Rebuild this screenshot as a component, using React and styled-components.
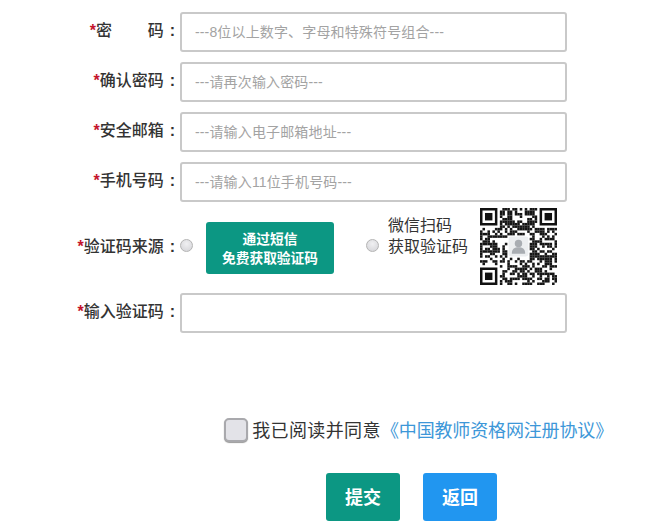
import React from 'react';
import styled, { createGlobalStyle } from 'styled-components';

const Global = createGlobalStyle`
  html, body { margin: 0; padding: 0; background: #fff; }
  body { font-family: "Liberation Sans", "Noto Sans CJK SC", sans-serif; overflow: hidden; }
`;
const Page = styled.div`
  width: 645px; height: 527px; overflow: hidden; padding-top: 12px; box-sizing: border-box;
  display: flex; flex-direction: column;
`;
const Row = styled.div`
  display: flex; align-items: center; height: 40px; margin-bottom: 10px;
`;
const Label = styled.label`
  width: 180px; flex: none; box-sizing: border-box; text-align: right; font-size: 16px; font-weight: 500; color: #333;
  white-space: pre; padding: 0 5px 6px 0;
`;
const Star = styled.span` color: #c4142c; font-weight: 700; `;
const Colon = styled.span` font-weight: 700; margin-left: 6px; `;
const Input = styled.input`
  width: 387px; height: 40px; box-sizing: border-box; border: 2px solid #c9c9c9; border-radius: 3px;
  padding: 0 13px 1px; font-size: 14px; letter-spacing: 0.15px; outline: none; background: #fff;
  font-family: "Liberation Sans", "Noto Sans CJK SC", sans-serif;
  &::placeholder { color: #a3a3a3; opacity: 1; }
`;
const SourceRow = styled.div`
  display: flex; align-items: center; height: 80px; margin: -4px 0 5px;
`;
const Radio = styled.span`
  width: 13px; height: 13px; flex: none; border-radius: 50%; box-sizing: border-box; margin-bottom: 6px;
  border: 1px solid #b4b4b4; background: radial-gradient(circle at 50% 35%, #f0f0f2, #d2d2d6);
`;
const SmsButton = styled.button`
  width: 128px; height: 52px; flex: none; margin: 0 32px 0 13px; border: 0; border-radius: 3px;
  background: #0c9783; color: #fff; font-size: 13.7px; font-weight: 700; line-height: 19px; padding: 0 0 1px;
  font-family: "Noto Sans CJK SC", sans-serif;
`;
const Scan = styled.div`
  width: 92px; flex: none; margin: 0 0 24px 9px; font-size: 16px; line-height: 21px; color: #333;
`;
const Agree = styled.div`
  display: flex; align-items: center; justify-content: flex-end; padding: 0 32px 0 0;
  margin-top: 74px; height: 26px; font-size: 18px; color: #333;
`;
const AgreeText = styled.span` letter-spacing: 0.4px; padding-bottom: 3px; `;
const Check = styled.span`
  width: 24px; height: 24px; box-sizing: border-box; flex: none; margin-right: 4px;
  border: 2px solid #a9a9ad; border-radius: 5px; background: #e3e3e8; box-shadow: 0 1px 1px #999;
`;
const Link = styled.a` color: #3d97d8; padding-bottom: 3px; letter-spacing: -0.15px; `;
const Actions = styled.div`
  display: flex; gap: 23px; margin: 30px 0 0 326px;
`;
const Action = styled.button`
  width: 74px; height: 48px; border: 0; border-radius: 3px; color: #fff; font-size: 18px; font-weight: 700; padding: 0 0 2px;
  background: ${p => p.$tone === 'blue' ? '#2196f0' : '#0c9783'};
  font-family: "Noto Sans CJK SC", sans-serif;
`;
const QrBox = styled.svg` width: 77px; height: 77px; flex: none; display: block; margin-bottom: 3px; `;

const N = 31;
const inFinder = (x, y) => (x < 8 && y < 8) || (x >= N - 8 && y < 8) || (x < 8 && y >= N - 8);
const on = (x, y) => {
  const h = Math.sin(x * 12.9898 + y * 78.233) * 43758.5453;
  return h - Math.floor(h) > 0.47;
};
const Finder = ({ x, y }) => (
  <g>
    <path d={`M${x} ${y}h7v7h-7zM${x + 1} ${y + 1}v5h5v-5z`} fillRule="evenodd" fill="#111" />
    <rect x={x + 2} y={y + 2} width="3" height="3" fill="#111" />
  </g>
);
const Qr = () => {
  const cells = [];
  for (let y = 0; y < N; y++) for (let x = 0; x < N; x++) {
    const center = x >= 11 && x < 20 && y >= 11 && y < 20;
    if (!inFinder(x, y) && !center && on(x, y)) cells.push(<rect key={x + '-' + y} x={x} y={y} width="1.02" height="1.02" fill="#151515" />);
  }
  return (
    <QrBox viewBox={`0 0 ${N} ${N}`} aria-label="二维码">
      {cells}
      <Finder x={0} y={0} /><Finder x={N - 7} y={0} /><Finder x={0} y={N - 7} />
      <rect x="11.5" y="11.5" width="8" height="8" rx="1" fill="#eceef0" />
      <circle cx="15.5" cy="14.3" r="1.5" fill="#a9adb2" />
      <path d="M12.8 18.4c0-2 1.2-2.6 2.7-2.6s2.7.6 2.7 2.6z" fill="#a9adb2" />
    </QrBox>
  );
};

const fields = [
  ['密        码', '---8位以上数字、字母和特殊符号组合---'],
  ['确认密码', '---请再次输入密码---'],
  ['安全邮箱', '---请输入电子邮箱地址---'],
  ['手机号码', '---请输入11位手机号码---'],
];

export default function App() {
  return (
    <Page>
      <Global />
      {fields.map(([l, p]) => (
        <Row key={l}>
          <Label><Star>*</Star>{l}<Colon>:</Colon></Label>
          <Input placeholder={p} />
        </Row>
      ))}
      <SourceRow>
        <Label><Star>*</Star>验证码来源<Colon>:</Colon></Label>
        <Radio />
        <SmsButton>通过短信<br />免费获取验证码</SmsButton>
        <Radio />
        <Scan>微信扫码<br />获取验证码</Scan>
        <Qr />
      </SourceRow>
      <Row>
        <Label><Star>*</Star>输入验证码<Colon>:</Colon></Label>
        <Input />
      </Row>
      <Agree>
        <Check /><AgreeText>我已阅读并同意</AgreeText><Link>《中国教师资格网注册协议》</Link>
      </Agree>
      <Actions>
        <Action>提交</Action>
        <Action $tone="blue">返回</Action>
      </Actions>
    </Page>
  );
}
